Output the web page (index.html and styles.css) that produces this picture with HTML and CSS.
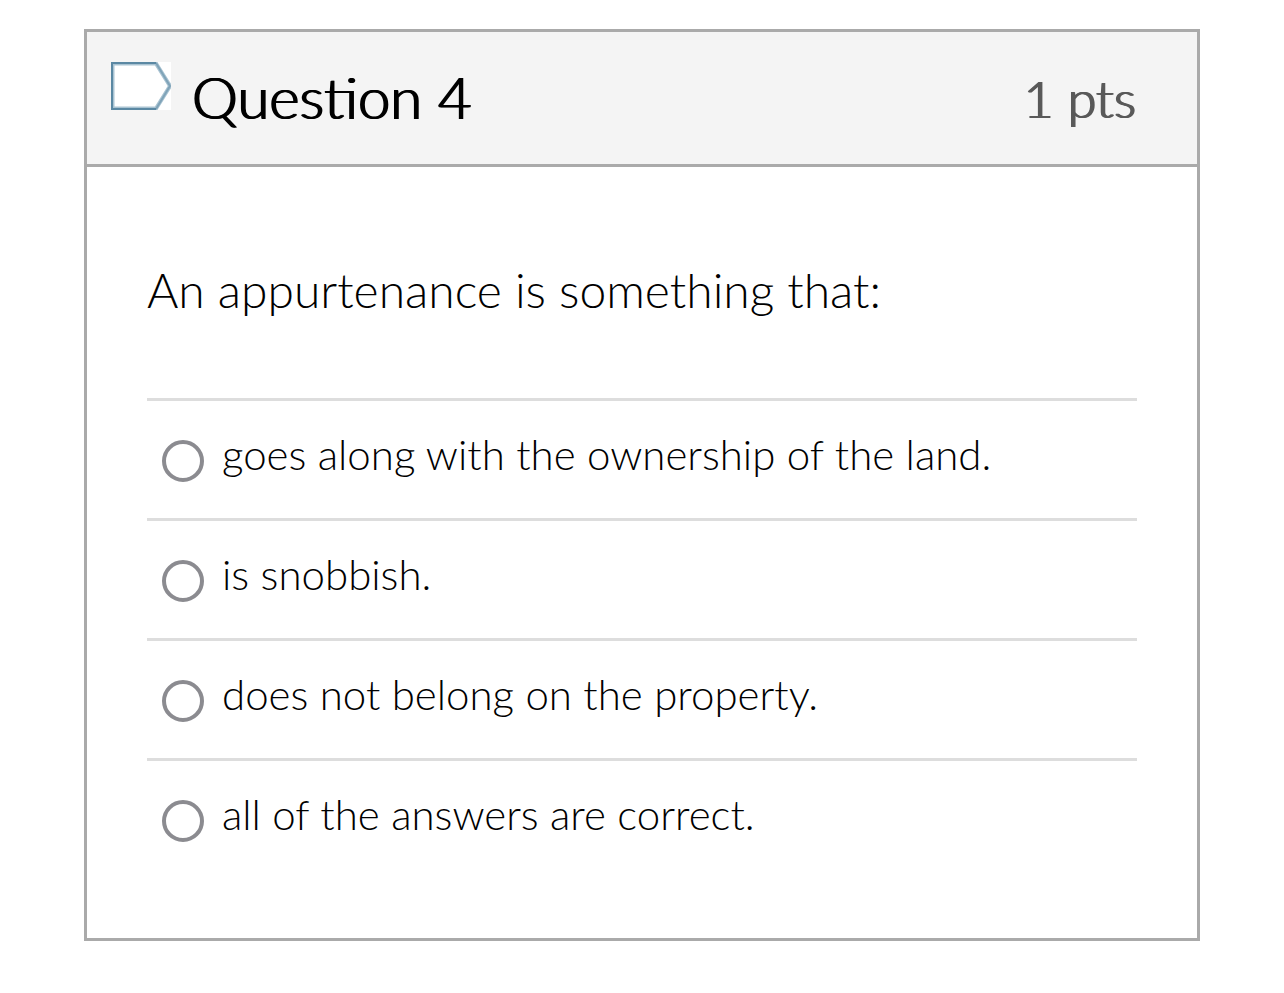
FILE: index.html
```html
<!DOCTYPE html>
<html lang="en">
<head>
<meta charset="UTF-8" />
<meta name="viewport" content="width=device-width, initial-scale=1" />
<title>Question 4</title>
<link rel="stylesheet" href="styles.css">
</head>
<body>
  <main class="question">
    <header class="header">
      <svg class="flag" viewBox="0 0 60 48" aria-hidden="true">
        <rect width="60" height="48" fill="#fff" />
        <path d="M1.5 1.5H45L59 24L45 46.5H1.5Z" fill="none" stroke="#a9c3d2" stroke-width="4" />
        <path d="M45 1L59 24L45 47" fill="none" stroke="#7fa3b8" stroke-width="2" />
        <path d="M45 1H1V47H45" fill="none" stroke="#5b88a3" stroke-width="2" />
      </svg>
      <h1>Question 4</h1>
      <span class="points">1 pts</span>
    </header>
    <form class="body">
      <p class="text" id="questionText">An appurtenance is something that:</p>
      <div class="answers" role="radiogroup" aria-labelledby="questionText">
        <div class="answer">
          <input type="radio" id="answer1" name="answer" value="1" />
          <label for="answer1">goes along with the ownership of the land.</label>
        </div>
        <div class="answer">
          <input type="radio" id="answer2" name="answer" value="2" />
          <label for="answer2">is snobbish.</label>
        </div>
        <div class="answer">
          <input type="radio" id="answer3" name="answer" value="3" />
          <label for="answer3">does not belong on the property.</label>
        </div>
        <div class="answer">
          <input type="radio" id="answer4" name="answer" value="4" />
          <label for="answer4">all of the answers are correct.</label>
        </div>
      </div>
    </form>
  </main>
</body>
</html>
```
FILE: styles.css
```css
*, *::before, *::after {
  box-sizing: border-box;
}
body {
  margin: 0;
  padding: 29px 84px 52px;
  background: #fff;
  color: #000;
  font-family: Lato, "Liberation Sans", sans-serif;
  font-weight: 300;
}
.question {
  border: 3px solid #aaa;
}
.header {
  display: flex;
  align-items: flex-start;
  padding: 30px 62px 30px 24px;
  background: #f4f4f4;
  border-bottom: 3px solid #aaa;
}
.flag {
  width: 60px;
  height: 48px;
  margin-right: 20px;
}
/* light face, thickened sideways only */
h1, .points {
  margin: 0;
  font-weight: 300;
  text-shadow: 1px 0 currentColor, 2px 0 currentColor;
}
h1 {
  font-size: 58px;
  line-height: 70px;
}
.points {
  margin-left: auto;
  font-size: 52px;
  line-height: 72px;
  color: #595959;
}
.body {
  padding: 87px 60px 60px;
}
.text {
  margin: 0 0 72px;
  font-size: 48px;
  line-height: 72px;
}
.answer {
  display: flex;
  align-items: flex-start;
  padding: 23px 15px 34px;
  border-top: 3px solid #ddd;
}
.answer input {
  appearance: none;
  flex: none;
  width: 42px;
  height: 42px;
  margin: 16px 18px 0 0;
  border: 4px solid #8b8b90;
  border-radius: 50%;
  background: #fff;
}
.answer input:checked {
  background: radial-gradient(#8b8b90 50%, #fff 55%);
}
.answer label {
  font-size: 42px;
  line-height: 60px;
}
```
